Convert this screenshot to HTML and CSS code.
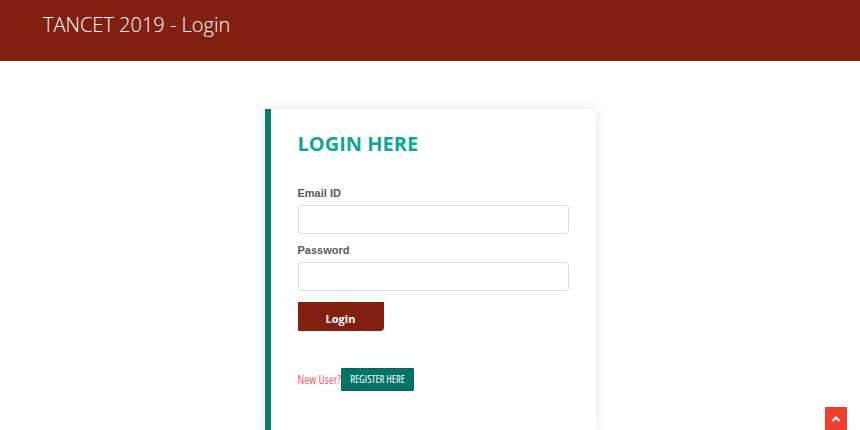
FILE: index.html
```html
<!DOCTYPE html>
<html lang="en">
<head>
<meta charset="utf-8">
<title>TANCET 2019 - Login</title>
<link rel="stylesheet" href="styles.css">
</head>
<body>
<header class="topbar">
  <h1 class="topbar-title">TANCET 2019 - Login</h1>
</header>
<main class="page">
  <section class="login-card">
    <h2 class="login-title">LOGIN HERE</h2>
    <form class="login-form">
      <label class="field-label" for="email">Email ID</label>
      <input class="field-input" id="email" type="text">
      <label class="field-label" for="password">Password</label>
      <input class="field-input" id="password" type="password">
      <button class="btn-login" type="button">Login</button>
    </form>
    <div class="register-row">
      <span class="new-user">New User?</span><a class="btn-register" href="#">REGISTER HERE</a>
    </div>
  </section>
</main>
<a class="scroll-top" href="#" aria-label="Back to top">
  <svg width="10" height="8" viewBox="0 0 10 8"><path d="M1.5 6 L5 2.5 L8.5 6" fill="none" stroke="#fff" stroke-width="2.2"/></svg>
</a>
</body>
</html>
```
FILE: styles.css
```css
html, body {
  margin: 0;
  padding: 0;
  background: #fff;
  font-family: "Open Sans", "Liberation Sans", sans-serif;
}

.topbar {
  height: 61px;
  background: #82200f;
  display: flex;
  align-items: center;
  padding-left: 43px;
  box-sizing: border-box;
}

.topbar-title {
  margin: 0 0 12px 0;
  color: #fff;
  font-weight: 300;
  font-size: 20px;
}

.page {
  display: flex;
  justify-content: center;
  padding-top: 48px;
}

.login-card {
  width: 331px;
  box-sizing: border-box;
  border-left: 6px solid #047f6b;
  border-top-right-radius: 8px;
  background: #fff;
  box-shadow: 0 0 12px rgba(0, 0, 0, 0.12);
  padding: 21px 27px 40px 27px;
}

.login-title {
  margin: 0 0 29px 0;
  color: #0ea69b;
  font-size: 20px;
  font-weight: 700;
  line-height: 28px;
}

.login-form {
  display: flex;
  flex-direction: column;
  align-items: flex-start;
}

.field-label {
  font-family: "Liberation Sans", Arial, sans-serif;
  font-weight: 700;
  font-size: 11px;
  color: #5a5a5a;
  line-height: 13px;
  margin-bottom: 5px;
}

.field-input {
  width: 100%;
  height: 29px;
  box-sizing: border-box;
  border: 1px solid #dedede;
  border-radius: 3px;
  margin: 0 0 10px 0;
  padding: 0 8px;
}

.btn-login {
  margin-top: 1px;
  width: 86px;
  height: 29px;
  border: none;
  border-radius: 0 0 4px 0;
  background: #82200f;
  color: #fff;
  font-family: "Open Sans", sans-serif;
  font-weight: 700;
  font-size: 11px;
  padding: 3px 0 0 0;
}

.register-row {
  margin-top: 37px;
  display: flex;
  align-items: center;
  height: 22px;
}

.new-user {
  color: #f5616f;
  font-size: 12px;
  font-stretch: condensed;
}

.btn-register {
  display: inline-flex;
  align-items: center;
  height: 21px;
  padding: 0 8px;
  background: #047367;
  border: 1px solid #0a6258;
  border-radius: 1px;
  color: #fff;
  font-size: 10.5px;
  font-stretch: condensed;
  text-decoration: none;
}

.scroll-top {
  position: fixed;
  right: 13px;
  bottom: 0;
  width: 22px;
  height: 23px;
  background: #f0402b;
  display: flex;
  align-items: center;
  justify-content: center;
}
```
